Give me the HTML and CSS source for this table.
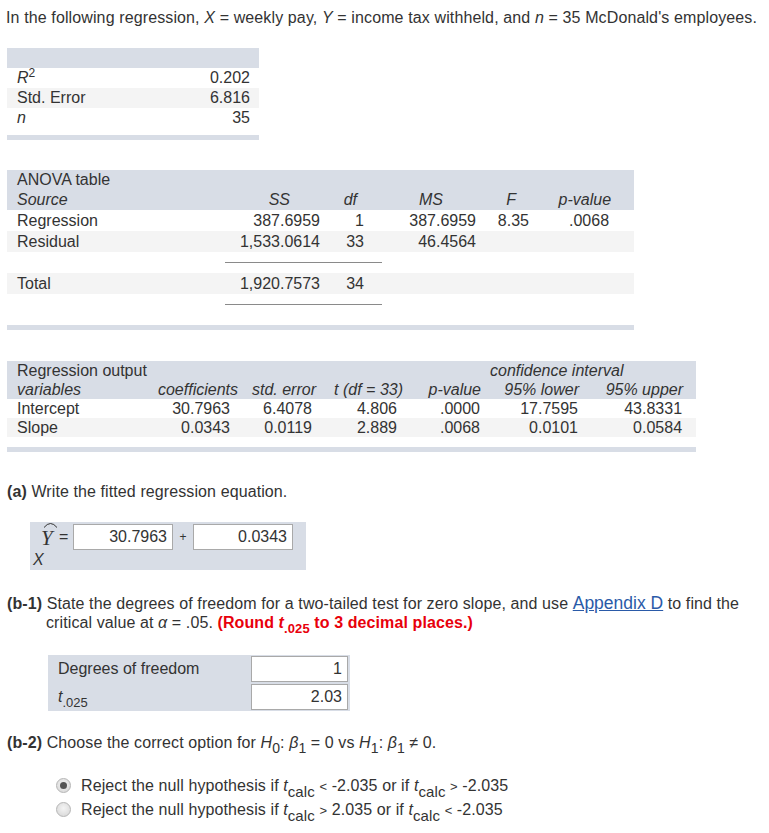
FILE: index.html
```html
<!DOCTYPE html>
<html>
<head>
<meta charset="utf-8">
<link rel="stylesheet" href="styles.css">
</head>
<body>
<p class="intro">In the following regression, <i>X</i> = weekly pay, <i>Y</i> = income tax withheld, and <i>n</i> = 35 McDonald's employees.</p>

<table class="stats">
  <tr class="bar-head"><td></td><td></td></tr>
  <tr><td class="lab"><i>R</i><sup>2</sup></td><td class="val">0.202</td></tr>
  <tr class="alt"><td class="lab">Std. Error</td><td class="val">6.816</td></tr>
  <tr><td class="lab"><i>n</i></td><td class="val">35</td></tr>
  <tr class="spacer"><td colspan="2"></td></tr>
  <tr class="bar-foot"><td colspan="2"></td></tr>
</table>

<table class="anova">
  <colgroup><col class="a1"><col class="a2"><col class="a3"><col class="a4"><col class="a5"><col class="a6"></colgroup>
  <tr class="head"><td class="lab" colspan="6">ANOVA table</td></tr>
  <tr class="head it"><td class="lab">Source</td><td class="h-ss">SS</td><td class="h-df">df</td><td class="h-ms">MS</td><td class="h-f">F</td><td class="h-p">p-value</td></tr>
  <tr class="row"><td class="lab">Regression</td><td class="d-ss">387.6959</td><td class="d-df">1</td><td class="d-ms">387.6959</td><td class="d-f">8.35</td><td class="d-p">.0068</td></tr>
  <tr class="row alt"><td class="lab">Residual</td><td class="d-ss">1,533.0614</td><td class="d-df">33</td><td class="d-ms">46.4564</td><td></td><td></td></tr>
  <tr class="row"><td></td><td colspan="2" class="rule-cell"><div class="rule"></div></td><td></td><td></td><td></td></tr>
  <tr class="row alt"><td class="lab">Total</td><td class="d-ss">1,920.7573</td><td class="d-df">34</td><td></td><td></td><td></td></tr>
  <tr class="row"><td></td><td colspan="2" class="rule-cell"><div class="rule"></div></td><td></td><td></td><td></td></tr>
  <tr class="spacer"><td colspan="6"></td></tr>
  <tr class="bar-foot"><td colspan="6"></td></tr>
</table>

<table class="regout">
  <colgroup><col class="r1"><col class="r2"><col class="r3"><col class="r4"><col class="r5"><col class="r6"><col class="r7"></colgroup>
  <tr class="head"><td class="lab" colspan="5">Regression output</td><td class="ci" colspan="2"><i>confidence interval</i></td></tr>
  <tr class="head it"><td class="lab">variables</td><td class="h2">coefficients</td><td class="h3">std. error</td><td class="h4">t (df = 33)</td><td class="h5">p-value</td><td class="h6">95% lower</td><td class="h7">95% upper</td></tr>
  <tr class="row"><td class="lab">Intercept</td><td class="d2">30.7963</td><td class="d3">6.4078</td><td class="d4">4.806</td><td class="d5">.0000</td><td class="d6">17.7595</td><td class="d7">43.8331</td></tr>
  <tr class="row alt"><td class="lab">Slope</td><td class="d2">0.0343</td><td class="d3">0.0119</td><td class="d4">2.889</td><td class="d5">.0068</td><td class="d6">0.0101</td><td class="d7">0.0584</td></tr>
  <tr class="spacer"><td colspan="7"></td></tr>
  <tr class="bar-foot"><td colspan="7"></td></tr>
</table>

<p class="q qa"><b>(a)</b> Write the fitted regression equation.</p>

<div class="eqbox">
  <div class="eqline">
    <span class="yhat">Y<svg class="hat" width="15" height="7" viewBox="0 0 15 7"><path d="M1 6.5 Q7.5 -1.5 14 6.5" fill="none" stroke="#333" stroke-width="1"/></svg></span><span class="eq">=</span><span class="field w100">30.7963</span><span class="plus">+</span><span class="field w100">0.0343</span>
  </div>
  <div class="xline"><i>X</i></div>
</div>

<p class="q qb1"><b>(b-1)</b> State the degrees of freedom for a two-tailed test for zero slope, and use <a class="link" href="#">Appendix D</a> to find the critical value at <i>α</i> = .05. <b class="red">(Round <i>t</i><sub>.025</sub> to 3 decimal places.)</b></p>

<div class="dfbox">
  <div class="dfrow"><span class="dflab">Degrees of freedom</span><span class="field w97">1</span></div>
  <div class="dfrow"><span class="dflab"><i>t</i><sub>.025</sub></span><span class="field w97">2.03</span></div>
</div>

<p class="q qb2"><b>(b-2)</b> Choose the correct option for <i>H</i><sub>0</sub>: <i>β</i><sub>1</sub> = 0 vs <i>H</i><sub>1</sub>: <i>β</i><sub>1</sub> ≠ 0.</p>

<div class="options">
  <div class="opt"><span class="radio on"></span><span>Reject the null hypothesis if <i>t</i><sub>calc</sub> <span class="sm">&lt;</span> -2.035 or if <i>t</i><sub>calc</sub> <span class="sm">&gt;</span> -2.035</span></div>
  <div class="opt"><span class="radio"></span><span>Reject the null hypothesis if <i>t</i><sub>calc</sub> <span class="sm">&gt;</span> 2.035 or if <i>t</i><sub>calc</sub> <span class="sm">&lt;</span> -2.035</span></div>
</div>
</body>
</html>
```

FILE: styles.css
```css
html, body {
  margin: 0;
  background: #fff;
}
body {
  padding: 8px 0 0 7px;
  font-family: "Liberation Sans", Arial, sans-serif;
  font-size: 16px;
  color: #333;
}
p { margin: 0; }
sub, sup { font-size: 13px; line-height: 0; }
sub { vertical-align: -5px; }
sup { vertical-align: 6px; font-size: 12px; }

.intro { line-height: 20px; margin-left: -1px; letter-spacing: 0.12px; }

table {
  border-collapse: collapse;
  border-spacing: 0;
  table-layout: fixed;
}
td { padding: 0; white-space: nowrap; }
.lab { padding-left: 10px; text-align: left; }
.alt td { background: #f4f4f4; }
.bar-head td { background: #d8dde6; height: 20px; }
.bar-foot td { background: #d8dde6; height: 5px; }
.it td { font-style: italic; }
.head td { background: #d8dde6; }

/* stats */
.stats { width: 252px; margin-top: 20px; }
.stats tr td { height: 20px; line-height: 20px; }
.stats .val { text-align: right; padding-right: 9px; }
.stats .spacer td { height: 7px; }
.stats .bar-foot td { height: 5px; }

/* anova */
.anova { width: 627px; margin-top: 30px; }
.a1 { width: 218px; } .a2 { width: 100px; } .a3 { width: 57px; }
.a4 { width: 100px; } .a5 { width: 58px; } .a6 { width: 94px; }
.anova .head td { height: 20px; line-height: 20px; }
.anova .row td { height: 21px; line-height: 21px; }
.anova td { text-align: right; }
.anova .lab { text-align: left; }
.h-ss { padding-right: 35px; }
.h-df { padding-right: 25px; }
.h-ms { padding-right: 39px; }
.h-f { padding-right: 24px; }
.h-p { padding-right: 23px; }
.d-ss { padding-right: 5px; }
.d-df { padding-right: 18px; }
.d-ms { padding-right: 6px; }
.d-f { padding-right: 11px; }
.d-p { padding-right: 25px; }
.rule-cell { vertical-align: middle; }
.rule { height: 1px; background: #8a8a8a; }
.anova .spacer td { height: 10px; }

/* regression output */
.regout { width: 689px; margin-top: 31px; }
.r1 { width: 143px; } .r2 { width: 90px; } .r3 { width: 80px; } .r4 { width: 85px; }
.r5 { width: 80px; } .r6 { width: 100px; } .r7 { width: 111px; }
.regout .head td, .regout .row td { height: 19px; line-height: 19px; }
.regout td { text-align: right; }
.regout .lab { text-align: left; }
.regout .ci { text-align: left; padding-left: 5px; }
.h2 { padding-right: 2px; } .h3 { padding-right: 4px; } .h4 { padding-right: 2px; }
.h5 { padding-right: 4px; } .h6 { padding-right: 6px; } .h7 { padding-right: 13px; }
.d2 { padding-right: 10px; } .d3 { padding-right: 8px; } .d4 { padding-right: 8px; }
.d5 { padding-right: 5px; } .d6 { padding-right: 7px; } .d7 { padding-right: 14px; }
.regout .spacer td { height: 10px; }

/* questions */
.q { line-height: 20px; letter-spacing: 0.1px; }
.qa { margin-top: 30px; }
.q b { color: #333; }

.eqbox {
  margin: 20px 0 0 23px;
  width: 276px;
  height: 48px;
  background: #d8dde6;
}
.eqline {
  display: flex;
  align-items: center;
  height: 28px;
  padding-top: 2px;
  box-sizing: border-box;
}
.yhat {
  position: relative;
  margin-left: 11px;
  font-family: "Liberation Serif", "Times New Roman", serif;
  font-style: italic;
  font-size: 21px;
  line-height: 20px;
  width: 16px;
  top: 1px;
}
.hat { position: absolute; left: 2px; top: -7px; }
.eq { margin-left: 2px; width: 14px; }
.field {
  display: inline-block;
  box-sizing: border-box;
  height: 26px;
  line-height: 24px;
  border: 1px solid #a9a9a9;
  background: #fff;
  text-align: right;
  padding-right: 5px;
}
.w100 { width: 100px; }
.w97 { width: 97px; }
.plus { width: 20px; text-align: center; font-size: 12px; }
.xline { padding-left: 3px; line-height: 20px; }

.qb1 {
  margin-top: 24px;
  line-height: 19px;
  padding-left: 39px;
  text-indent: -39px;
}
.link { color: #2a5aa8; text-decoration: underline; font-size: 17.5px; letter-spacing: 0; }
.red, .qb1 b.red { color: #e8000b; }
.red sub { font-size: 13px; }

.dfbox {
  margin: 23px 0 0 41px;
  width: 302px;
  background: #d8dde6;
  padding: 1px 0;
}
.dfrow {
  display: flex;
  justify-content: space-between;
  align-items: center;
  height: 26px;
  padding-right: 2px;
}
.dfrow + .dfrow { margin-top: 2px; }
.dflab { padding-left: 10px; }

.qb2 { margin-top: 22px; }
.qb2 sub { font-size: 14px; }
.options { margin-top: 21px; padding-left: 49px; }
.opt {
  display: flex;
  align-items: center;
  height: 24px;
  line-height: 24px;
  letter-spacing: 0.1px;
}
.opt sub { font-size: 15px; vertical-align: -6px; }
.radio {
  display: inline-block;
  box-sizing: border-box;
  width: 15px;
  height: 15px;
  border-radius: 50%;
  border: 1px solid #b5b5b5;
  background: radial-gradient(circle at 50% 40%, #f4f4f4, #d4d4d4);
  margin-right: 10px;
  position: relative;
  top: -1px;
}
.radio.on::after {
  content: "";
  position: absolute;
  left: 3px;
  top: 3px;
  width: 7px;
  height: 7px;
  border-radius: 50%;
  background: #555;
}
.sm { font-size: 13px; }
```
